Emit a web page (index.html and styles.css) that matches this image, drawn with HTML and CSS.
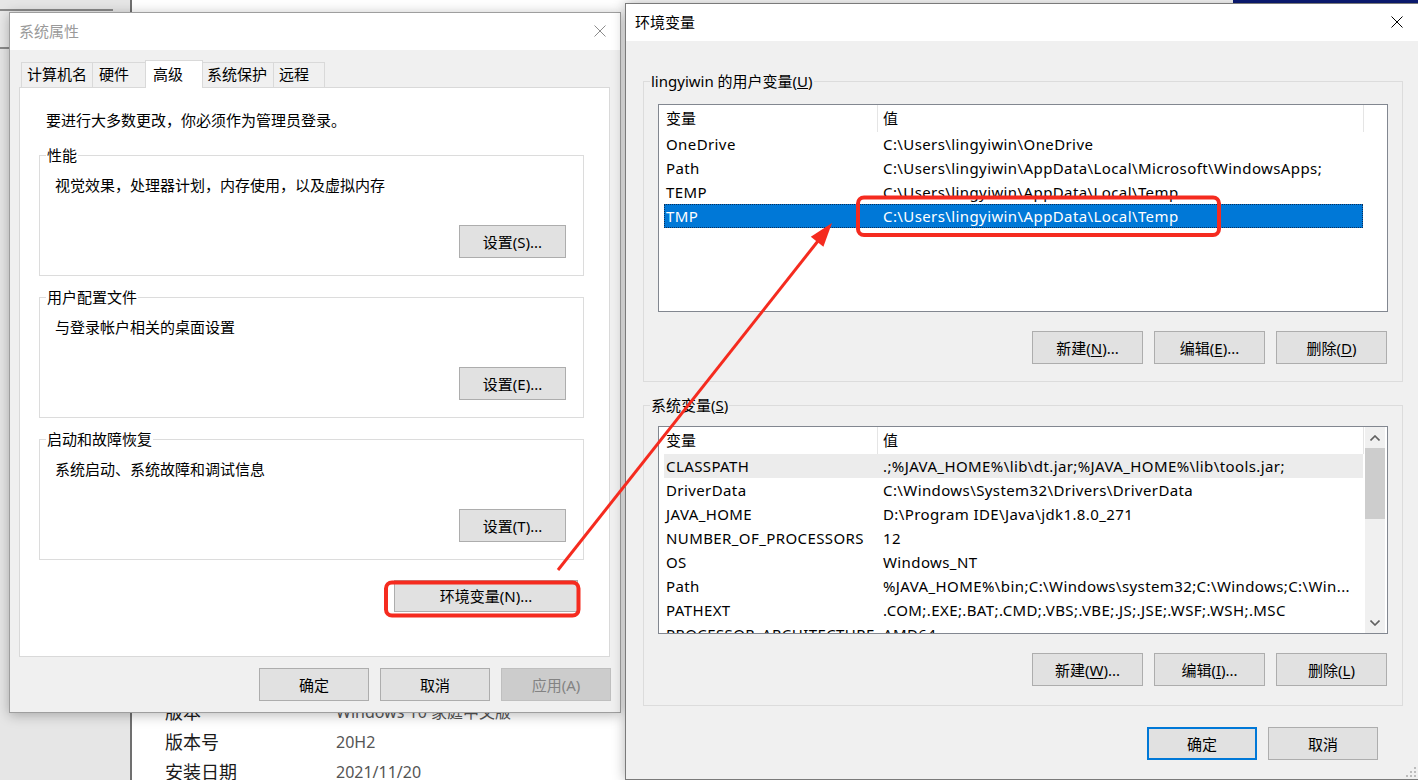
FILE: index.html
```html
<!DOCTYPE html>
<html lang="zh-CN">
<head>
<meta charset="utf-8">
<title>环境变量</title>
<link rel="stylesheet" href="styles.css">
</head>
<body>
<div class="desk">
  <div class="bgwin-left"></div>
  <div class="bgwin-blue"></div>

  <div class="bg-settings">
    <div class="spec-list">
      <div class="spec-row"><span class="spec-k">版本</span><span class="spec-v">Windows 10 家庭中文版</span></div>
      <div class="spec-row"><span class="spec-k">版本号</span><span class="spec-v">20H2</span></div>
      <div class="spec-row"><span class="spec-k">安装日期</span><span class="spec-v">2021/11/20</span></div>
    </div>
  </div>

  <section class="dlg sysprop">
    <header class="titlebar">
      <span class="title title-inactive">系统属性</span>
      <svg class="close close-inactive" width="12" height="12" viewBox="0 0 12 12"><path d="M0.5 0.5L11.5 11.5M11.5 0.5L0.5 11.5"/></svg>
    </header>
    <div class="dlg-body sys-body">
      <div class="tabs">
        <div class="tab tab-name">计算机名</div>
        <div class="tab tab-hw">硬件</div>
        <div class="tab tab-active">高级</div>
        <div class="tab tab-prot">系统保护</div>
        <div class="tab tab-remote">远程</div>
      </div>
      <div class="tab-panel">
        <p class="intro">要进行大多数更改，你必须作为管理员登录。</p>
        <fieldset class="group sys-group">
          <legend>性能</legend>
          <p class="group-text">视觉效果，处理器计划，内存使用，以及虚拟内存</p>
          <button class="btn btn-set">设置(S)...</button>
        </fieldset>
        <fieldset class="group sys-group">
          <legend>用户配置文件</legend>
          <p class="group-text">与登录帐户相关的桌面设置</p>
          <button class="btn btn-set">设置(E)...</button>
        </fieldset>
        <fieldset class="group sys-group">
          <legend>启动和故障恢复</legend>
          <p class="group-text">系统启动、系统故障和调试信息</p>
          <button class="btn btn-set">设置(T)...</button>
        </fieldset>
        <button class="btn btn-env">环境变量(N)...</button>
      </div>
      <div class="btn-row sys-btns">
        <button class="btn btn-main">确定</button>
        <button class="btn btn-main">取消</button>
        <button class="btn btn-main btn-disabled">应用(A)</button>
      </div>
    </div>
  </section>

  <section class="dlg envdlg">
    <header class="titlebar env-titlebar">
      <span class="title">环境变量</span>
      <svg class="close" width="12" height="12" viewBox="0 0 12 12"><path d="M0.5 0.5L11.5 11.5M11.5 0.5L0.5 11.5"/></svg>
    </header>
    <div class="dlg-body env-body">
      <fieldset class="group env-group env-user">
        <legend>lingyiwin 的用户变量(<u>U</u>)</legend>
        <div class="listview lv-user">
          <div class="lv-content">
            <div class="lv-head"><div class="hc hc1">变量</div><div class="hc hc2">值</div></div>
            <div class="lv-row"><span class="c1">OneDrive</span><span class="c2">C:\Users\lingyiwin\OneDrive</span></div>
            <div class="lv-row"><span class="c1">Path</span><span class="c2">C:\Users\lingyiwin\AppData\Local\Microsoft\WindowsApps;</span></div>
            <div class="lv-row"><span class="c1">TEMP</span><span class="c2">C:\Users\lingyiwin\AppData\Local\Temp</span></div>
            <div class="lv-row lv-selected"><span class="c1">TMP</span><span class="c2">C:\Users\lingyiwin\AppData\Local\Temp</span></div>
          </div>
        </div>
        <div class="btn-row group-btns">
          <button class="btn btn-env-act">新建(<u>N</u>)...</button>
          <button class="btn btn-env-act">编辑(<u>E</u>)...</button>
          <button class="btn btn-env-act">删除(<u>D</u>)</button>
        </div>
      </fieldset>

      <fieldset class="group env-group env-sys">
        <legend>系统变量(<u>S</u>)</legend>
        <div class="listview lv-sys">
          <div class="lv-content">
            <div class="lv-head"><div class="hc hc1">变量</div><div class="hc hc2">值</div></div>
            <div class="lv-row lv-hover"><span class="c1">CLASSPATH</span><span class="c2">.;%JAVA_HOME%\lib\dt.jar;%JAVA_HOME%\lib\tools.jar;</span></div>
            <div class="lv-row"><span class="c1">DriverData</span><span class="c2">C:\Windows\System32\Drivers\DriverData</span></div>
            <div class="lv-row"><span class="c1">JAVA_HOME</span><span class="c2">D:\Program IDE\Java\jdk1.8.0_271</span></div>
            <div class="lv-row"><span class="c1">NUMBER_OF_PROCESSORS</span><span class="c2">12</span></div>
            <div class="lv-row"><span class="c1">OS</span><span class="c2">Windows_NT</span></div>
            <div class="lv-row"><span class="c1">Path</span><span class="c2">%JAVA_HOME%\bin;C:\Windows\system32;C:\Windows;C:\Win...</span></div>
            <div class="lv-row"><span class="c1">PATHEXT</span><span class="c2">.COM;.EXE;.BAT;.CMD;.VBS;.VBE;.JS;.JSE;.WSF;.WSH;.MSC</span></div>
            <div class="lv-row"><span class="c1">PROCESSOR_ARCHITECTURE</span><span class="c2">AMD64</span></div>
          </div>
          <div class="vscroll">
            <div class="sb-btn"><svg width="10" height="6" viewBox="0 0 10 6"><path d="M0.5 5.5L5 1L9.5 5.5"/></svg></div>
            <div class="sb-track"><div class="sb-thumb"></div></div>
            <div class="sb-btn"><svg width="10" height="6" viewBox="0 0 10 6"><path d="M0.5 0.5L5 5L9.5 0.5"/></svg></div>
          </div>
        </div>
        <div class="btn-row group-btns">
          <button class="btn btn-env-act">新建(<u>W</u>)...</button>
          <button class="btn btn-env-act">编辑(<u>I</u>)...</button>
          <button class="btn btn-env-act">删除(<u>L</u>)</button>
        </div>
      </fieldset>

      <div class="btn-row env-btns">
        <button class="btn btn-main btn-default">确定</button>
        <button class="btn btn-main">取消</button>
      </div>
    </div>
    <svg class="grip" width="12" height="12" viewBox="0 0 12 12">
      <rect x="9" y="1" width="2" height="2"/>
      <rect x="5" y="5" width="2" height="2"/><rect x="9" y="5" width="2" height="2"/>
      <rect x="1" y="9" width="2" height="2"/><rect x="5" y="9" width="2" height="2"/><rect x="9" y="9" width="2" height="2"/>
    </svg>
  </section>

  <svg class="annot" width="1418" height="780" viewBox="0 0 1418 780">
    <rect x="386" y="582.5" width="192.5" height="33" rx="6" ry="6"/>
    <rect x="858" y="197.5" width="361" height="37.5" rx="6" ry="6"/>
    <line x1="558" y1="570" x2="818" y2="241"/>
    <polygon class="head" points="832,223 823.4,246.8 810.8,236.8"/>
  </svg>
</div>
</body>
</html>
```

FILE: styles.css
```css
* { box-sizing: border-box; }

html, body {
  margin: 0;
  padding: 0;
}

body {
  width: 1418px;
  height: 780px;
  overflow: hidden;
  font-family: "Noto Sans", "Noto Sans CJK SC", sans-serif;
  font-size: 15px;
  color: #000;
}

.desk {
  position: relative;
  width: 1418px;
  height: 780px;
  background: #e6e6e6;
  overflow: hidden;
}

/* background windows */
.bgwin-left {
  position: absolute;
  left: 0;
  top: 9px;
  width: 113px;
  height: 40px;
  background: #e9e9e9;
  border-top: 2px solid #8a8a8a;
  border-bottom: 2px solid #8a8a8a;
  z-index: 1;
}

.bgwin-blue {
  position: absolute;
  left: 1233px;
  top: 0;
  width: 185px;
  height: 4px;
  background: #0c1d7a;
  z-index: 1;
}

.bg-settings {
  position: absolute;
  left: 130px;
  top: 0;
  right: 0;
  bottom: 0;
  background: #fff;
  border-left: 2px solid #707070;
}

.spec-list {
  padding: 697px 0 0 33px;
  display: flex;
  flex-direction: column;
}

.spec-row {
  display: flex;
  align-items: center;
  height: 30px;
  line-height: 30px;
  white-space: nowrap;
}

.spec-k {
  width: 171px;
  font-size: 18px;
  color: #1a1a1a;
}

.spec-v {
  font-size: 16px;
  color: #555;
}

/* dialogs */
.dlg {
  position: absolute;
  display: flex;
  flex-direction: column;
  background: #f0f0f0;
}

.sysprop {
  left: 9px;
  top: 12px;
  width: 612px;
  height: 701px;
  border: 1px solid #9e9e9e;
  box-shadow: 0 2px 12px rgba(0, 0, 0, 0.28);
  z-index: 2;
}

.envdlg {
  left: 625px;
  top: 3px;
  right: -2px;
  height: 777px;
  border: 1px solid #7a7a7a;
  box-shadow: 0 0 12px rgba(0, 0, 0, 0.3);
  z-index: 3;
}

.titlebar {
  flex: none;
  height: 37px;
  background: #fff;
  display: flex;
  align-items: center;
  justify-content: space-between;
  padding: 0 14px 1px 9px;
}

.env-titlebar {
  padding-right: 16px;
}

.title {
  font-size: 15px;
  line-height: 20px;
  color: #000;
}

.title-inactive {
  color: #9a9a9a;
}

.close path {
  stroke: #000;
  stroke-width: 1;
  fill: none;
}

.close-inactive path {
  stroke: #8c8c8c;
}

.dlg-body {
  flex: 1;
  display: flex;
  flex-direction: column;
}

.sys-body {
  padding: 10px 10px 0 9px;
}

.env-body {
  padding: 30px 16px 0 17px;
}

/* tabs */
.tabs {
  display: flex;
  align-items: flex-end;
  height: 27px;
  margin-left: 2px;
}

.tab {
  flex: none;
  height: 25px;
  padding: 0 0 0 5px;
  line-height: 23px;
  border: 1px solid #d9d9d9;
  border-bottom: none;
  margin-right: -1px;
  background: #f0f0f0;
  white-space: nowrap;
}

.tab-name { width: 72px; }
.tab-hw { width: 54px; padding-left: 6px; }
.tab-prot { width: 72px; padding-left: 4px; }
.tab-remote { width: 52px; }

.tab-active {
  position: relative;
  z-index: 1;
  width: 58px;
  height: 28px;
  margin-bottom: -1px;
  padding-left: 7px;
  line-height: 27px;
  background: #fff;
}

.tab-panel {
  height: 570px;
  background: #fff;
  border: 1px solid #d9d9d9;
  display: flex;
  flex-direction: column;
}

.intro {
  margin: 0;
  padding: 22px 0 0 26px;
  line-height: 20px;
}

/* group boxes */
.group {
  margin: 0;
  min-width: 0;
  border: 1px solid #dcdcdc;
}

.group legend {
  padding: 0 1px;
  line-height: 20px;
  font-size: 15px;
}

.sys-group {
  margin: 15px 25px 0 19px;
  padding: 10px 17px 17px 15px;
}

.sys-group legend {
  margin-left: -9px;
}

.sys-group + .sys-group {
  margin-top: 11px;
}

.group-text {
  margin: 0;
  line-height: 20px;
  white-space: nowrap;
}

/* buttons */
.btn {
  font: inherit;
  font-size: 15px;
  color: #000;
  background: #e1e1e1;
  border: 1px solid #adadad;
  padding: 0;
  height: 33px;
  line-height: 20px;
  white-space: nowrap;
}

.btn u {
  text-decoration-thickness: 1px;
  text-underline-offset: 2px;
}

.btn-set {
  display: block;
  width: 107px;
  margin: 30px 0 0 auto;
}

.btn-env {
  display: block;
  width: 184px;
  height: 32px;
  margin: 20px 31px 0 auto;
}

.btn-row {
  display: flex;
  justify-content: flex-end;
  gap: 11px;
}

.sys-btns {
  margin: 11px -1px 0 0;
}

.btn-main {
  width: 110px;
}

.btn-disabled {
  background: #cccccc;
  border-color: #bfbfbf;
  color: #838383;
}

.btn-default {
  border: 2px solid #0078d7;
}

.btn-env-act {
  width: 111px;
}

/* environment dialog groups */
.env-group {
  padding: 13px 14px 17px 14px;
}

.env-group legend {
  margin-left: -8px;
}

.env-sys {
  margin-top: 13px;
  padding-top: 11px;
  padding-bottom: 19px;
}

.group-btns {
  margin: 19px 1px 0 0;
}

.env-btns {
  margin: 21px 25px 0 0;
}

/* list views */
.listview {
  display: flex;
  height: 208px;
  background: #fff;
  border: 1px solid #828790;
  overflow: hidden;
}

.lv-content {
  flex: 1;
  min-width: 0;
  overflow: hidden;
}

.lv-head {
  display: flex;
  height: 27px;
  line-height: 27px;
}

.hc {
  height: 27px;
  border-right: 1px solid #e5e5e5;
  white-space: nowrap;
}

.hc1 {
  width: 219px;
  padding-left: 7px;
}

.hc2 {
  width: 486px;
  padding-left: 5px;
}

.lv-row {
  display: flex;
  width: 699px;
  height: 24px;
  margin-left: 5px;
  line-height: 24px;
  letter-spacing: 0.4px;
  white-space: nowrap;
}

.lv-row .c1 {
  flex: none;
  width: 213px;
  padding-left: 2px;
  overflow: hidden;
}

.lv-row .c2 {
  flex: 1;
  padding-left: 6px;
  overflow: hidden;
}

.lv-selected {
  background: #0078d7;
  color: #fff;
  outline: 1px dotted #0c2f5a;
  outline-offset: -1px;
}

.lv-hover {
  background: #ececec;
}

/* scrollbar */
.vscroll {
  flex: none;
  width: 20px;
  margin-right: 2px;
  background: #f0f0f0;
  display: flex;
  flex-direction: column;
}

.sb-btn {
  height: 21px;
  display: flex;
  align-items: center;
  justify-content: center;
}

.sb-btn path {
  fill: none;
  stroke: #606060;
  stroke-width: 1.6;
}

.sb-track {
  flex: 1;
}

.sb-thumb {
  height: 71px;
  background: #cdcdcd;
}

.grip {
  position: absolute;
  right: 2px;
  bottom: 1px;
}

.grip rect {
  fill: #bcbcbc;
}

/* annotations */
.annot {
  position: absolute;
  left: 0;
  top: 0;
  z-index: 10;
  pointer-events: none;
}

.annot rect {
  fill: none;
  stroke: #f52b1f;
  stroke-width: 4;
}

.annot line {
  stroke: #f52b1f;
  stroke-width: 3;
}

.annot .head {
  fill: #f52b1f;
}
```
